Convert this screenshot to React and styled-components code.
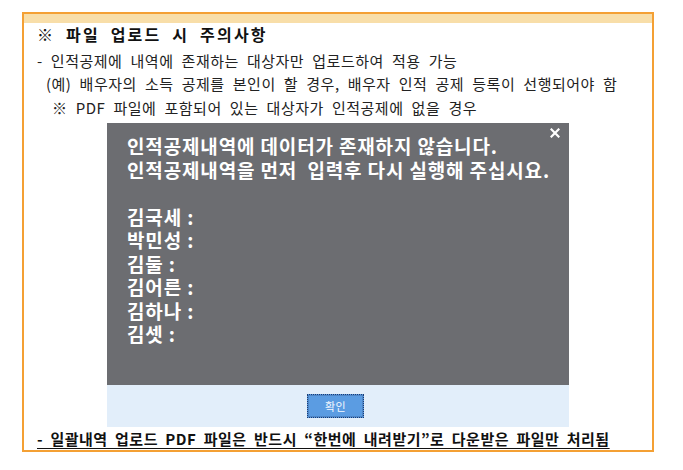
import React from 'react';
import styled, { createGlobalStyle } from 'styled-components';

const GlobalStyle = createGlobalStyle`
  body {
    margin: 0;
    background: #fff;
    font-family: "Noto Sans CJK KR", "Noto Sans", sans-serif;
  }
`

const Page = styled.div`
  padding: 12px 0 0 22px;
`

const NoticeBox = styled.div`
  width: 632px;
  box-sizing: border-box;
  border: 2px solid #f4a034;
  background: #fff;
`

const HeaderBand = styled.div`
  height: 9px;
  background: #f8dea9;
`

const NoticeBody = styled.div`
  color: #222;
  font-size: 15px;
  letter-spacing: 0.5px;
  word-spacing: 4.3px;
`

const Title = styled.div`
  font-size: 16px;
  font-weight: 700;
  line-height: 23.5px;
  margin-bottom: 2px;
  padding-left: 13px;
  color: #111;
  letter-spacing: 2.2px;
  word-spacing: 5px;
`

const Line = styled.div`
  line-height: 23.5px;
  padding-left: ${props => 13 + (props.indent || 0)}px;
  white-space: nowrap;
`

const Dialog = styled.div`
  width: 462px;
  margin: 4px auto 0;
`

const DialogBody = styled.div`
  position: relative;
  height: 262px;
  box-sizing: border-box;
  padding: 11px 20px;
  background: #6c6d71;
  color: #fff;
  font-size: 19px;
  font-weight: 700;
  line-height: 23.5px;
  letter-spacing: 0.85px;
  word-spacing: 0;
`

const Message = styled.div`
  white-space: pre;
`

const CloseButton = styled.button`
  position: absolute;
  top: 5px;
  right: 9px;
  width: 10px;
  height: 10px;
  padding: 0;
  border: none;
  background: transparent;
  display: flex;
  cursor: pointer;
`

const DialogFooter = styled.div`
  height: 42px;
  background: #e2eefa;
  display: flex;
  align-items: center;
  justify-content: center;
`

const ConfirmButton = styled.button`
  width: 57px;
  height: 24px;
  margin-right: 5px;
  background: #5b9ce2;
  border: 1px dotted #1e3b70;
  outline: 1px solid #4f86c6;
  outline-offset: -2px;
  color: #f4f8ff;
  font-family: inherit;
  font-size: 11px;
  letter-spacing: 0.5px;
  padding: 0;
`

const BottomNote = styled.div`
  font-weight: 700;
  line-height: 22px;
  margin-top: 1px;
  padding-left: 13px;
  color: #111;
  word-spacing: 3.5px;
  text-decoration: underline;
  text-underline-offset: 3px;
  text-decoration-thickness: 1px;
  white-space: nowrap;
`

const names = ['김국세', '박민성', '김둘', '김어른', '김하나', '김셋']

function App() {
  return (
    <Page>
      <GlobalStyle />
      <NoticeBox>
        <HeaderBand />
        <NoticeBody>
          <Title>※ 파일 업로드 시 주의사항</Title>
          <Line>- 인적공제에 내역에 존재하는 대상자만 업로드하여 적용 가능</Line>
          <Line indent={9}>(예) 배우자의 소득 공제를 본인이 할 경우, 배우자 인적 공제 등록이 선행되어야 함</Line>
          <Line indent={15}>※ PDF 파일에 포함되어 있는 대상자가 인적공제에 없을 경우</Line>
          <Dialog>
            <DialogBody>
              <CloseButton aria-label="닫기">
                <svg width="10" height="10" viewBox="0 0 10 10">
                  <path d="M1.5 1.5 L8.5 8.5 M8.5 1.5 L1.5 8.5" stroke="#fff" strokeWidth="2.2" strokeLinecap="square" />
                </svg>
              </CloseButton>
              <Message>인적공제내역에 데이터가 존재하지 않습니다.</Message>
              <Message>인적공제내역을 먼저  입력후 다시 실행해 주십시요.</Message>
              <Message>&nbsp;</Message>
              {names.map(name => (
                <Message key={name}>{name} :</Message>
              ))}
            </DialogBody>
            <DialogFooter>
              <ConfirmButton>확인</ConfirmButton>
            </DialogFooter>
          </Dialog>
          <BottomNote>- 일괄내역 업로드 PDF 파일은 반드시 “한번에 내려받기”로 다운받은 파일만 처리됨</BottomNote>
        </NoticeBody>
      </NoticeBox>
    </Page>
  )
}

export default App;
